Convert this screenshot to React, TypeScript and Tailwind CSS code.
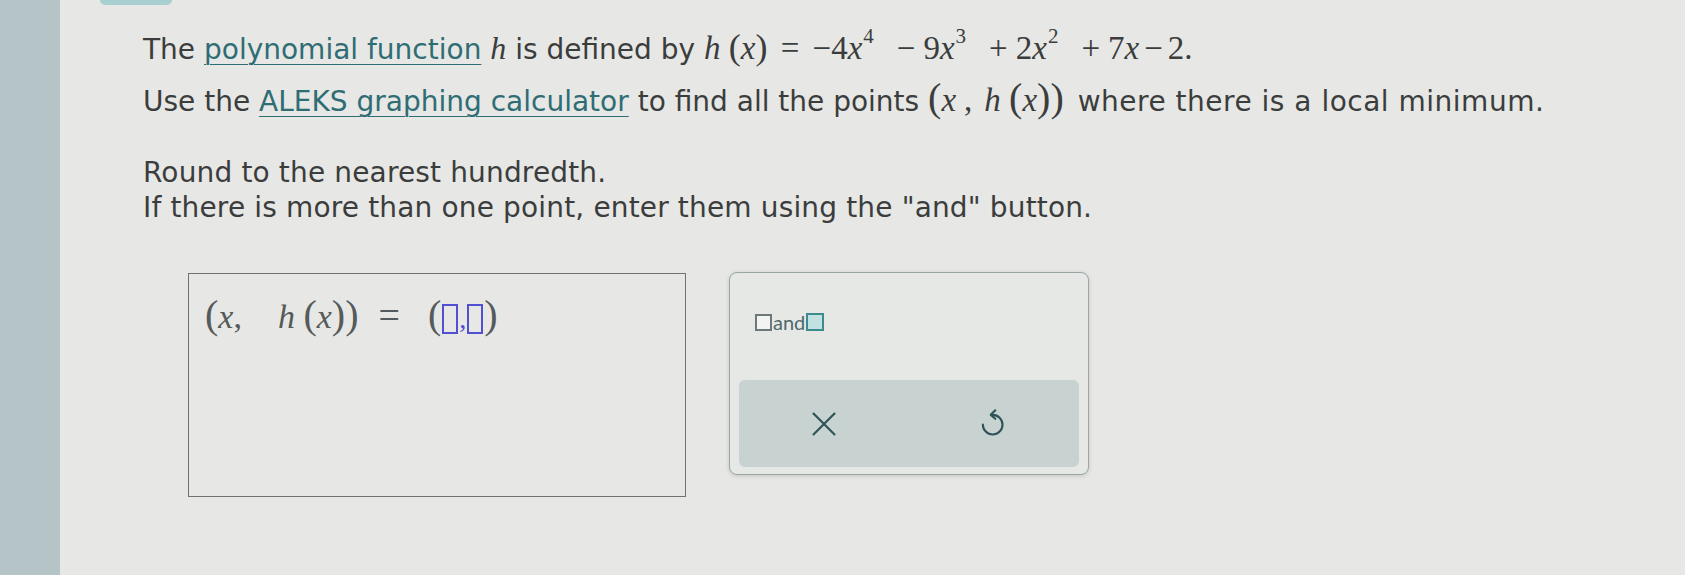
import { X } from 'lucide-react';

const serif = "font-['Liberation_Serif',serif]";

function V({ children }: { children: React.ReactNode }) {
  return <span className={`${serif} italic`}>{children}</span>;
}

function P({ children, size = 'text-[40px]' }: { children: React.ReactNode; size?: string }) {
  return <span className={`${serif} ${size} font-light`}>{children}</span>;
}

function Sup({ children }: { children: React.ReactNode }) {
  return <span className={`${serif} text-[21px] align-[16px] ml-[1px] mr-[23px]`}>{children}</span>;
}

function Op({ children }: { children: React.ReactNode }) {
  return <span className="mr-[8px]">{children}</span>;
}

function BlankBox() {
  return <span className="inline-block w-[16px] h-[30px] border-2 border-[#5050d0] align-[-6px] mx-[1px]" />;
}

function UndoIcon() {
  return (
    <svg width="32" height="34" viewBox="0 0 24 26" fill="none" stroke="#2e5356" strokeWidth="1.6" strokeLinecap="round" strokeLinejoin="round">
      <path d="M11 6a7.5 7.5 0 1 1 -7.5 7.5" />
      <path d="M13 2.5 L9.5 6 L13 9" />
    </svg>
  );
}

export default function App() {
  return (
    <div className="flex w-[1685px] h-[575px] bg-[#e7e7e5] overflow-hidden font-['DejaVu_Sans',sans-serif] text-[#3b3d3d]">
      <div className="w-[60px] shrink-0 bg-[#b5c4c6]" />
      <div className="relative flex-1 pl-[83px] pt-[12px]">
        <div className="absolute left-[40px] top-0 w-[72px] h-[5px] rounded-b-lg bg-[#a9d0d0]" />
        <div className="text-[28px] leading-[48px] whitespace-nowrap">
          The <span className="text-[#2f6d74] underline underline-offset-[5px] decoration-1">polynomial function</span>{' '}
          <span className={`${serif} italic text-[32px]`}>h</span> is defined by{' '}
          <span className={`${serif} text-[33px]`}>
            <V>h</V> <P size="text-[36px]">(</P><V>x</V><P size="text-[36px]">)</P> <span className="mx-[5px]">=</span> −4<V>x</V>
            <Sup>4</Sup>
            <Op>−</Op>9<V>x</V>
            <Sup>3</Sup>
            <Op>+</Op>2<V>x</V>
            <Sup>2</Sup>
            <Op>+</Op>7<V>x</V>
            <span className="mx-[5px]">−</span>2.
          </span>
        </div>
        <div className="text-[28px] leading-[48px] whitespace-nowrap">
          Use the <span className="text-[#2f6d74] underline underline-offset-[5px] decoration-1">ALEKS graphing calculator</span> to find all the points{' '}
          <span className={`${serif} text-[33px]`}>
            <P>(</P><V>x</V>
            <span className="ml-[8px] mr-[12px]">,</span>
            <V>h</V> <P>(</P><V>x</V><P>))</P>
          </span>
          <span className="ml-[14px] tracking-[0.5px]">where there is a local minimum.</span>
        </div>
        <div className="mt-[29px] text-[28px] leading-[35px] whitespace-nowrap tracking-[0.15px]">
          <div>Round to the nearest hundredth.</div>
          <div>If there is more than one point, enter them using the "and" button.</div>
        </div>

        <div className="flex items-start mt-[48px] ml-[45px] gap-[43px]">
          <div className="w-[498px] h-[224px] border border-[#6e7272] pl-[16px] pt-[19px]">
            <div className={`${serif} text-[34px] leading-[44px] text-[#555a5a] whitespace-nowrap`}>
              <P>(</P><V>x</V>
              <span className="mr-[36px]">,</span>
              <V>h</V> <P>(</P><V>x</V><P>))</P>
              <span className="ml-[20px] mr-[28px] text-[38px]">=</span>
              <P>(</P><BlankBox />
              <span className="text-[#5050d0] text-[28px]">,</span>
              <BlankBox /><P>)</P>
            </div>
          </div>

          <div className="-mt-[1px] w-[360px] h-[203px] rounded-lg border border-[#9aa6a6] bg-[#e6e8e6] shadow-[0_1px_4px_rgba(0,0,0,0.15)] flex flex-col">
            <div className="flex items-center h-[98px] pl-[25px]">
              <span className="inline-block w-[17px] h-[17px] border-2 border-[#6d7878] bg-[#f2f4f3]" />
              <span className="text-[20px] text-[#4e6a6c] font-['Lato',sans-serif] leading-none mx-[1px]">and</span>
              <span className="inline-block w-[18px] h-[18px] border-2 border-[#3e8a8e] bg-[#c2e2e1]" />
            </div>
            <div className="mx-[9px] mt-[9px] h-[87px] rounded-md bg-[#c8d2d1] grid grid-cols-2 items-center justify-items-center">
              <X size={42} strokeWidth={1.2} color="#2e5356" />
              <UndoIcon />
            </div>
          </div>
        </div>
      </div>
    </div>
  );
}
